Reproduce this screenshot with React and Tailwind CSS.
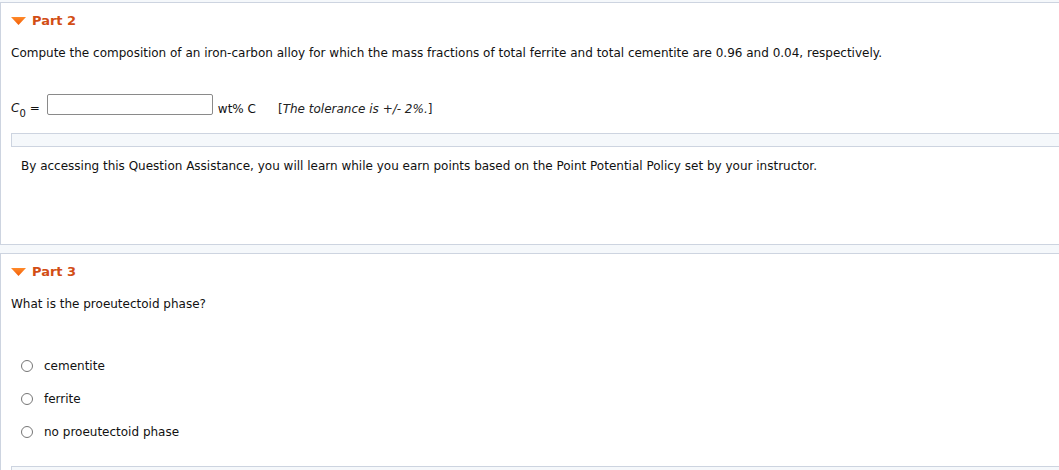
import React from "react";

function Caret() {
  return (
    <svg width="15" height="8" viewBox="0 0 15 8" className="shrink-0">
      <defs>
        <linearGradient id="cg" x1="0" y1="0" x2="0" y2="1">
          <stop offset="0" stopColor="#ff8a2a" />
          <stop offset="1" stopColor="#f25c05" />
        </linearGradient>
      </defs>
      <polygon points="0,0 15,0 7.5,8" fill="url(#cg)" />
    </svg>
  );
}

function PartHeader({ label }) {
  return (
    <div className="flex items-center h-[18px] pl-[10px] gap-[6px]">
      <Caret />
      <span className="text-[13px] font-bold text-[#d24e16] leading-[18px]">{label}</span>
    </div>
  );
}

function Radio({ label }) {
  return (
    <div className="flex items-center h-[16px] pl-[20px]">
      <span className="w-[12px] h-[12px] rounded-full border border-[#767676] bg-white shrink-0" />
      <span className="ml-[11px] leading-[16px]">{label}</span>
    </div>
  );
}

export default function App() {
  return (
    <div
      className="w-full h-[470px] overflow-hidden bg-[#f5f8fb] text-[12px] text-[#111]"
      style={{ fontFamily: '"DejaVu Sans", Verdana, sans-serif' }}
    >
      <div className="mt-[2px] h-[243px] bg-white border-t border-l border-b border-[#cdd4e0] flex flex-col">
        <div className="pt-[9px]">
          <PartHeader label="Part 2" />
        </div>
        <p className="mt-[15px] pl-[10px] leading-[16px]">
          Compute the composition of an iron-carbon alloy for which the mass fractions of total ferrite and total cementite are 0.96 and 0.04, respectively.
        </p>
        <div className="mt-[33px] flex items-center h-[21px] pl-[10px]">
          <span className="leading-[16px] mt-[6px]">
            <i>C</i>
            <sub className="text-[10px] align-[-3px]">0</sub>
            <span className="ml-[4px]">=</span>
          </span>
          <div className="ml-[7px] w-[166px] h-[21px] border border-[#8a8a8a] rounded-[2px] bg-white" />
          <span className="ml-[5px] mt-[9px]">wt% C</span>
          <span className="ml-[22px] mt-[9px] text-[#222]">
            [<i>The tolerance is +/- 2%.</i>]
          </span>
        </div>
        <div className="mt-[18px] ml-[10px] h-[14px] bg-[#f5f8fb] border-t border-b border-l border-[#cdd4e0]" />
        <p className="mt-[11px] pl-[20px] leading-[16px]">
          By accessing this Question Assistance, you will learn while you earn points based on the Point Potential Policy set by your instructor.
        </p>
      </div>
      <div className="mt-[8px] h-[300px] bg-white border-t border-l border-[#cdd4e0] flex flex-col">
        <div className="pt-[9px]">
          <PartHeader label="Part 3" />
        </div>
        <p className="mt-[15px] pl-[10px] leading-[16px]">What is the proeutectoid phase?</p>
        <div className="mt-[46px] flex flex-col gap-[17px]">
          <Radio label="cementite" />
          <Radio label="ferrite" />
          <Radio label="no proeutectoid phase" />
        </div>
        <div className="mt-[26px] ml-[10px] h-[14px] bg-[#f5f8fb] border-t border-l border-[#cdd4e0]" />
      </div>
    </div>
  );
}
